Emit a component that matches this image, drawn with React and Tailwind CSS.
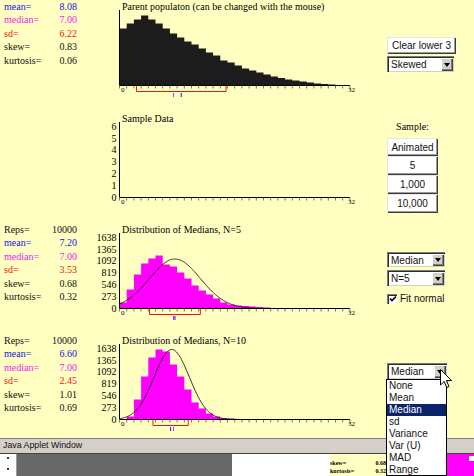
import React from "react";

// chart svg starts at page x = 85; axis sits at page x = 119.5
const X0 = 34.5;
const BW = 7.2;
const BASE = 85.5;

const BLUE = "#1414e0";
const MAGENTA = "#f01cf0";
const RED = "#f01414";

const parentBars = [57, 62, 66, 70, 66, 62, 57, 52, 48, 44, 41, 37, 33, 30, 25, 23, 20, 17, 15, 13, 11, 9, 7.5, 6, 5, 4, 3, 2, 1.5, 1, 0.5, 0.3];
const n5Bars = [6, 19, 34, 45, 50, 53, 44, 42, 36, 30, 23, 18, 14, 10, 6, 4, 3, 2.5, 2, 1.5, 1, 0.5];
const n10Bars = [0.5, 3, 20, 43, 62, 70, 68, 55, 43, 30, 17, 11, 6, 3, 1.5, 1, 0.5];

const medianLabels = ["0", "273", "546", "819", "1092", "1365", "1638"];
const sampleLabels = ["0", "1", "2", "3", "4", "5", "6"];

const xv = (v) => X0 + (v + 0.5) * BW;

// histogram outline as one step path so bars have no seams
const stepPath = (bars) => {
  let d = `M${X0},${BASE}`;
  bars.forEach((h, i) => {
    d += ` L${(X0 + i * BW).toFixed(2)},${(BASE - h).toFixed(2)} L${(X0 + (i + 1) * BW).toFixed(2)},${(BASE - h).toFixed(2)}`;
  });
  d += ` L${(X0 + bars.length * BW).toFixed(2)},${BASE} Z`;
  return d;
};

function Chart({ title, bars, fill, curve, yLabels, bracket, marks, height }) {
  const ticks = Array.from({ length: 33 }, (_, i) => X0 + i * BW);
  let curvePts = "";
  if (curve) {
    const pts = [];
    for (let x = X0; x <= X0 + 32 * BW; x += 1) {
      const v = (x - X0) / BW - 0.5;
      const z = (v - curve.mean) / curve.sd;
      pts.push(`${x.toFixed(1)},${(BASE - curve.peak * Math.exp(-0.5 * z * z)).toFixed(1)}`);
    }
    curvePts = pts.join(" ");
  }
  return (
    <svg width="302" height={height} className="block shrink-0 font-['Liberation_Serif',serif]">
      <text x="37" y="10" fontSize="10" fill="#000">
        {title}
      </text>
      {bars && <path d={stepPath(bars)} fill={fill} />}
      {curve && <polyline points={curvePts} fill="none" stroke="#1a1a1a" strokeWidth="0.9" />}
      <line x1={X0} y1="10" x2={X0} y2={BASE} stroke="#000" />
      <line x1={X0} y1={BASE} x2={X0 + 32 * BW} y2={BASE} stroke="#000" />
      {ticks.map((t, i) => (
        <line key={i} x1={t} y1={BASE} x2={t} y2={BASE + 3} stroke="#555" strokeWidth="0.8" />
      ))}
      <text x="36" y="91.5" fontSize="7">0</text>
      <text x="263" y="91.5" fontSize="7">32</text>
      {yLabels &&
        yLabels.map((l, k) => (
          <text key={l} x="31.5" y={BASE - k * 11.9 + 3.5} fontSize="10" textAnchor="end">
            {l}
          </text>
        ))}
      {bracket && (
        <polyline
          points={`${xv(bracket[0])},86 ${xv(bracket[0])},91.5 ${xv(bracket[1])},91.5 ${xv(bracket[1])},86`}
          fill="none"
          stroke={RED}
          strokeWidth="1"
        />
      )}
      {marks &&
        marks.map((m, i) => (
          <line key={i} x1={xv(m.v)} y1="93" x2={xv(m.v)} y2="97" stroke={m.color} strokeWidth="1" />
        ))}
    </svg>
  );
}

function Stats({ rows }) {
  return (
    <div className="w-[85px] shrink-0 pl-[4px] font-['Liberation_Serif',serif] text-[10px]">
      <div className="w-[73px]">
        {rows.map(([label, value, color]) => (
          <div key={label} className="flex justify-between h-[13.45px] leading-[13.45px]" style={{ color }}>
            <span>{label}</span>
            <span>{value}</span>
          </div>
        ))}
      </div>
    </div>
  );
}

function Btn({ children, className }) {
  return (
    <div
      className={`flex items-center justify-center bg-white text-[10px] text-[#111] font-['Liberation_Sans',Arial,sans-serif] shadow-[inset_1px_1px_0_#e6e6e6,inset_-1px_-1px_0_#3c3c3c,inset_-2px_-2px_0_#9a9a9a] ${className}`}
    >
      {children}
    </div>
  );
}

function Select({ label, className }) {
  return (
    <div
      className={`flex bg-white pt-[2px] pl-[2px] pb-[1px] pr-[1px] shadow-[inset_1px_1px_0_#7a7a7a,inset_2px_2px_0_#2c2c2c,inset_-1px_-1px_0_#d4d0c8] ${className}`}
    >
      <div className="flex-1 flex items-center pl-[2px] text-[10px] text-[#111] font-['Liberation_Sans',Arial,sans-serif]">
        {label}
      </div>
      <div className="w-[12px] bg-[#d4d0c8] flex items-center justify-center shadow-[inset_1px_1px_0_#ffffff,inset_-1px_-1px_0_#404040,inset_-2px_-2px_0_#808080]">
        <div className="w-0 h-0 border-l-[3.5px] border-r-[3.5px] border-t-[4px] border-l-transparent border-r-transparent border-t-black" />
      </div>
    </div>
  );
}

export default function App() {
  return (
    <div className="relative w-[474px] h-[476px] overflow-hidden bg-[#ffffc2] text-black">
      <div className="h-[438px] flex flex-col">
        {/* parent population */}
        <div className="flex h-[112px] shrink-0">
          <Stats
            rows={[
              ["mean=", "8.08", BLUE],
              ["median=", "7.00", MAGENTA],
              ["sd=", "6.22", RED],
              ["skew=", "0.83", "#111"],
              ["kurtosis=", "0.06", "#111"],
            ]}
          />
          <Chart
            height={112}
            title="Parent populaton (can be changed with the mouse)"
            bars={parentBars}
            fill="#1c1c1c"
            bracket={[8.08 - 6.22, 8.08 + 6.22]}
            marks={[
              { v: 7, color: MAGENTA },
              { v: 8.08, color: BLUE },
            ]}
          />
          <div className="pt-[37px] flex flex-col gap-[2px]">
            <Btn className="w-[69px] h-[17px]">Clear lower 3</Btn>
            <Select label="Skewed" className="w-[67px] h-[16px]" />
          </div>
        </div>

        {/* sample data */}
        <div className="flex h-[111px] shrink-0">
          <div className="w-[85px] shrink-0" />
          <Chart height={111} title="Sample Data" yLabels={sampleLabels} />
          <div className="flex flex-col">
            <div className="w-[51px] h-[26px] pt-[9px] text-center text-[10px] leading-[12px] font-['Liberation_Serif',serif]">
              Sample:
            </div>
            <Btn className="w-[51px] h-[18px]">Animated</Btn>
            <Btn className="w-[51px] h-[19px]">5</Btn>
            <Btn className="w-[51px] h-[19px]">1,000</Btn>
            <Btn className="w-[51px] h-[19px]">10,000</Btn>
          </div>
        </div>

        {/* medians N=5 */}
        <div className="flex h-[111px] shrink-0">
          <Stats
            rows={[
              ["Reps=", "10000", "#111"],
              ["mean=", "7.20", BLUE],
              ["median=", "7.00", MAGENTA],
              ["sd=", "3.53", RED],
              ["skew=", "0.68", "#111"],
              ["kurtosis=", "0.32", "#111"],
            ]}
          />
          <Chart
            height={111}
            title="Distribution of Medians, N=5"
            bars={n5Bars}
            fill="#ff00ff"
            curve={{ mean: 7.2, sd: 3.53, peak: 49.5 }}
            yLabels={medianLabels}
            bracket={[7.2 - 3.53, 7.2 + 3.53]}
            marks={[
              { v: 7, color: MAGENTA },
              { v: 7.2, color: BLUE },
            ]}
          />
          <div className="pt-[29px] flex flex-col">
            <Select label="Median" className="w-[58px] h-[15px]" />
            <Select label="N=5" className="w-[58px] h-[16px] mt-[3px]" />
            <div className="flex items-center mt-[5px] gap-[3px]">
              <div className="w-[10px] h-[10px] bg-white flex items-center justify-center shadow-[inset_1px_1px_0_#7a7a7a,inset_2px_2px_0_#2c2c2c]">
                <svg width="8" height="8" viewBox="0 0 8 8" className="ml-[1px] mt-[1px]">
                  <path d="M1 3.5 L3 5.5 L7 1.5" fill="none" stroke="#000" strokeWidth="1.6" />
                </svg>
              </div>
              <span className="text-[10px] text-[#111] font-['Liberation_Sans',Arial,sans-serif]">Fit normal</span>
            </div>
          </div>
        </div>

        {/* medians N=10 */}
        <div className="flex h-[104px] shrink-0">
          <Stats
            rows={[
              ["Reps=", "10000", "#111"],
              ["mean=", "6.60", BLUE],
              ["median=", "7.00", MAGENTA],
              ["sd=", "2.45", RED],
              ["skew=", "1.01", "#111"],
              ["kurtosis=", "0.69", "#111"],
            ]}
          />
          <Chart
            height={104}
            title="Distribution of Medians, N=10"
            bars={n10Bars}
            fill="#ff00ff"
            curve={{ mean: 6.75, sd: 2.45, peak: 70 }}
            yLabels={medianLabels}
            bracket={[6.6 - 2.45, 6.6 + 2.45]}
            marks={[
              { v: 6.6, color: BLUE },
              { v: 7, color: MAGENTA },
            ]}
          />
          <div className="pt-[29px]">
            <Select label="Median" className="w-[60px] h-[16px]" />
          </div>
        </div>
      </div>

      {/* applet window status strip */}
      <div className="h-px bg-[#808080]" />
      <div className="h-[14px] bg-[#d4d0c8] flex items-center pl-[3px] text-[8.8px] text-[#111] font-['Liberation_Sans',Arial,sans-serif]">
        Java Applet Window
      </div>
      <div className="h-px bg-[#404040]" />
      <div className="flex h-[22px]">
        <div className="w-[17px] bg-white border-r border-[#9a9a9a] flex flex-col items-center pt-[3px] gap-[9px]">
          <div className="w-[2px] h-[2px] bg-[#333]" />
          <div className="w-[2px] h-[2px] bg-[#333]" />
        </div>
        <div className="w-[215px] bg-[#686868]" />
        <div className="w-[98px] bg-white" />
        <div className="w-[117px] bg-[#ffffc2] overflow-hidden">
          <div className="w-[56px] pt-[5px] text-[6px] leading-[8px] font-['Liberation_Serif',serif] font-bold">
            <div className="flex justify-between">
              <span>skew=</span>
              <span>0.68</span>
            </div>
            <div className="flex justify-between">
              <span>kurtosis=</span>
              <span>0.32</span>
            </div>
          </div>
        </div>
        <div className="flex-1 bg-[#ff00ff] flex justify-end items-start pt-[2px]">
          <div className="w-[5px] h-[5px] bg-white" />
        </div>
      </div>

      {/* open dropdown list */}
      <div className="absolute left-[386px] top-[379px] w-[61px] h-[97px] bg-white border border-black flex flex-col text-[10px] leading-[12px] text-[#111] font-['Liberation_Sans',Arial,sans-serif]">
        {["None", "Mean", "Median", "sd", "Variance", "Var (U)", "MAD", "Range"].map((item) => (
          <div
            key={item}
            className={`h-[12px] pl-[2px] shrink-0 ${item === "Median" ? "bg-[#0a246a] text-white" : ""}`}
          >
            {item}
          </div>
        ))}
      </div>

      {/* mouse pointer */}
      <svg width="13" height="20" viewBox="0 0 13 20" className="absolute left-[440px] top-[369px]">
        <path d="M0.5 0.5 L0.5 16 L4.2 12.4 L6.8 18.5 L9 17.5 L6.5 11.6 L11.5 11.6 Z" fill="#fff" stroke="#000" strokeWidth="1" />
      </svg>
    </div>
  );
}
